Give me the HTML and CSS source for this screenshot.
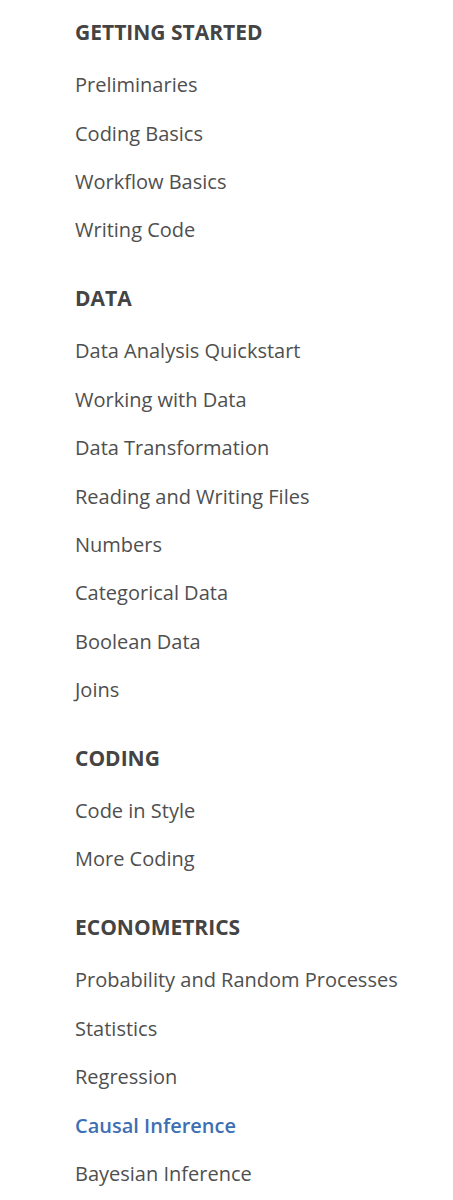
FILE: index.html
```html
<!DOCTYPE html>
<html lang="en">
<head>
<meta charset="utf-8">
<link rel="stylesheet" href="styles.css">
</head>
<body>
<nav class="sidebar">
  <section class="group">
    <h2 class="group-title">GETTING STARTED</h2>
    <ul class="links">
      <li><a href="#">Preliminaries</a></li>
      <li><a href="#">Coding Basics</a></li>
      <li><a href="#">Workflow Basics</a></li>
      <li><a href="#">Writing Code</a></li>
    </ul>
  </section>
  <section class="group">
    <h2 class="group-title">DATA</h2>
    <ul class="links">
      <li><a href="#">Data Analysis Quickstart</a></li>
      <li><a href="#">Working with Data</a></li>
      <li><a href="#">Data Transformation</a></li>
      <li><a href="#">Reading and Writing Files</a></li>
      <li><a href="#">Numbers</a></li>
      <li><a href="#">Categorical Data</a></li>
      <li><a href="#">Boolean Data</a></li>
      <li><a href="#">Joins</a></li>
    </ul>
  </section>
  <section class="group">
    <h2 class="group-title">CODING</h2>
    <ul class="links">
      <li><a href="#">Code in Style</a></li>
      <li><a href="#">More Coding</a></li>
    </ul>
  </section>
  <section class="group">
    <h2 class="group-title">ECONOMETRICS</h2>
    <ul class="links">
      <li><a href="#">Probability and Random Processes</a></li>
      <li><a href="#">Statistics</a></li>
      <li><a href="#">Regression</a></li>
      <li><a class="active" href="#">Causal Inference</a></li>
      <li><a href="#">Bayesian Inference</a></li>
    </ul>
  </section>
</nav>
</body>
</html>
```
FILE: styles.css
```css
html, body {
  margin: 0;
  padding: 0;
  background: #ffffff;
}
body {
  font-family: "Open Sans", "Noto Sans", "Liberation Sans", sans-serif;
  color: #4f4f4f;
}
.sidebar {
  padding: 14px 0 0 75px;
}
.group + .group {
  margin-top: 25.6px;
}
.group-title {
  margin: 0 0 11px 0;
  font-size: 21px;
  line-height: 36px;
  font-weight: 700;
  color: #444444;
}
.links {
  list-style: none;
  margin: 0;
  padding: 0;
}
.links li {
  height: 48.4px;
  display: flex;
  align-items: center;
}
.links a {
  font-size: 20px;
  line-height: 24px;
  color: #4f4f4f;
  text-decoration: none;
}
.links a.active {
  color: #3e6fb5;
  font-weight: 600;
}
```
